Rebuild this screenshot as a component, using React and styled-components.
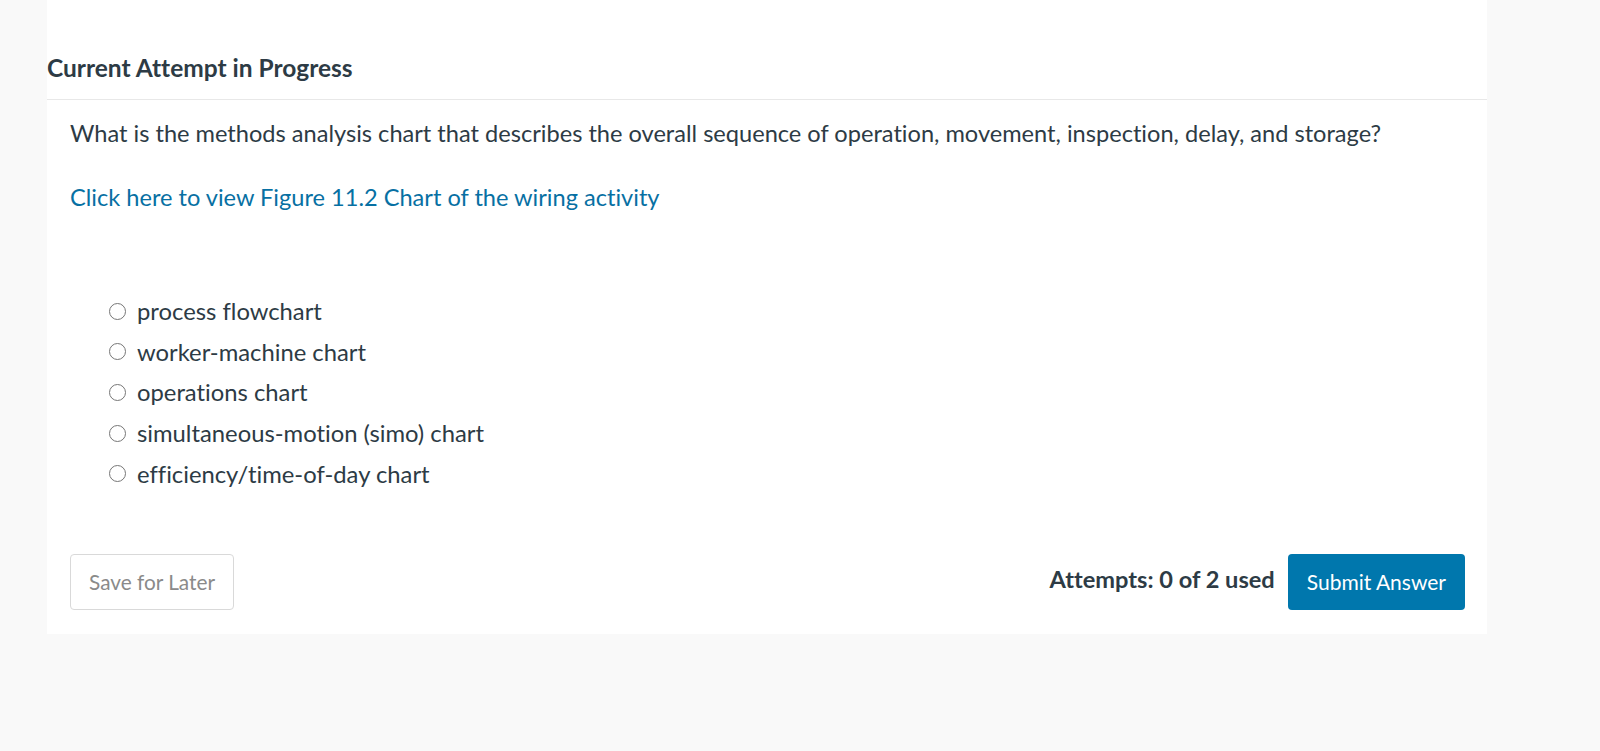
import React from 'react';
import styled, { createGlobalStyle } from 'styled-components';

const GlobalStyle = createGlobalStyle`
  html, body {
    margin: 0;
    padding: 0;
    background: #f9f9f9;
    font-family: Lato, "Liberation Sans", sans-serif;
    font-variant-ligatures: no-common-ligatures;
    color: #2d3b45;
  }
`;

const Page = styled.div`
  min-height: 751px;
  background: #f9f9f9;
`;

const Panel = styled.div`
  width: 1440px;
  margin-left: 47px;
  background: #fff;
  padding-bottom: 24px;
`;

const Header = styled.div`
  height: 100px;
  display: flex;
  align-items: flex-end;
  padding-bottom: 19px;
  box-sizing: border-box;
  border-bottom: 1px solid #e8e8e8;
`;

const Title = styled.h2`
  margin: 0;
  font-size: 24.5px;
  font-weight: 700;
  line-height: 1;
`;

const Body = styled.div`
  padding: 0 22px 0 23px;
`;

const Question = styled.p`
  margin: 18px 0 0;
  font-size: 23.6px;
  line-height: 30px;
`;

const FigureLink = styled.a`
  display: block;
  margin-top: 34px;
  font-size: 23.6px;
  line-height: 30px;
  color: #0770a3;
  text-decoration: none;
`;

const Options = styled.ul`
  list-style: none;
  margin: 79px 0 0;
  padding: 0 0 0 39px;
`;

const Option = styled.li`
  display: flex;
  align-items: center;
  height: 40.6px;
  font-size: 23.8px;
`;

const Radio = styled.span`
  width: 15px;
  height: 15px;
  border: 1.5px solid #767676;
  border-radius: 50%;
  margin-right: 11px;
  flex-shrink: 0;
`;

const Actions = styled.div`
  display: flex;
  align-items: center;
  margin-top: 60px;
`;

const SaveButton = styled.button`
  height: 56px;
  padding: 0 18px;
  background: #fff;
  border: 1px solid #d9d9d9;
  border-radius: 4px;
  font-family: inherit;
  font-size: 20.8px;
  color: #8a8a8a;
`;

const Spacer = styled.div`
  flex: 1;
`;

const Attempts = styled.span`
  font-size: 23.6px;
  font-weight: 700;
  margin-right: 13px;
  margin-top: -5px;
`;

const SubmitButton = styled.button`
  height: 56px;
  padding: 0 19px;
  background: #0077ad;
  border: none;
  border-radius: 4px;
  font-family: inherit;
  font-size: 21px;
  color: #fff;
`;

const options = [
  'process flowchart',
  'worker-machine chart',
  'operations chart',
  'simultaneous-motion (simo) chart',
  'efficiency/time-of-day chart',
];

export default function App() {
  return (
    <>
      <GlobalStyle />
      <Page>
        <Panel>
          <Header>
            <Title>Current Attempt in Progress</Title>
          </Header>
          <Body>
            <Question>
              What is the methods analysis chart that describes the overall sequence of operation, movement, inspection, delay, and storage?
            </Question>
            <FigureLink href="#">Click here to view Figure 11.2 Chart of the wiring activity</FigureLink>
            <Options>
              {options.map((o) => (
                <Option key={o}>
                  <Radio />
                  {o}
                </Option>
              ))}
            </Options>
            <Actions>
              <SaveButton>Save for Later</SaveButton>
              <Spacer />
              <Attempts>Attempts: 0 of 2 used</Attempts>
              <SubmitButton>Submit Answer</SubmitButton>
            </Actions>
          </Body>
        </Panel>
      </Page>
    </>
  );
}
